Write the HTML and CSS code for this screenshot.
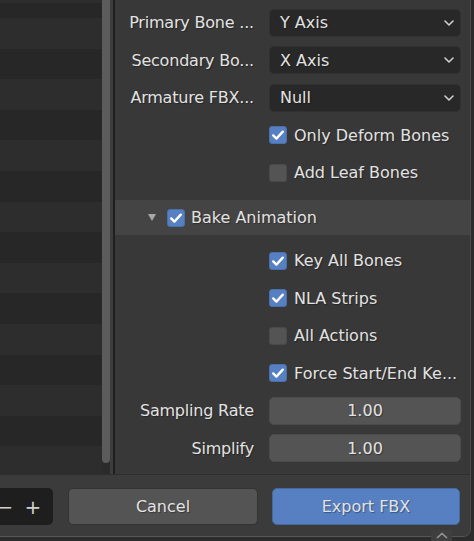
FILE: index.html
```html
<!DOCTYPE html>
<html>
<head>
<meta charset="utf-8">
<link rel="stylesheet" href="styles.css">
</head>
<body>
<div class="window">
  <div class="dialog">
    <div class="main">
      <div class="list"></div>
      <div class="scroll"><div class="thumb"></div></div>
      <div class="panel">
        <div class="row">
          <div class="label">Primary Bone ...</div>
          <div class="dropdown"><span>Y Axis</span><svg class="chev" width="10" height="6" viewBox="0 0 10 6"><path d="M1 1 L5 5 L9 1" fill="none" stroke="#d0d0d0" stroke-width="1.6" stroke-linecap="round" stroke-linejoin="round"/></svg></div>
        </div>
        <div class="row">
          <div class="label">Secondary Bo...</div>
          <div class="dropdown"><span>X Axis</span><svg class="chev" width="10" height="6" viewBox="0 0 10 6"><path d="M1 1 L5 5 L9 1" fill="none" stroke="#d0d0d0" stroke-width="1.6" stroke-linecap="round" stroke-linejoin="round"/></svg></div>
        </div>
        <div class="row">
          <div class="label">Armature FBX...</div>
          <div class="dropdown"><span>Null</span><svg class="chev" width="10" height="6" viewBox="0 0 10 6"><path d="M1 1 L5 5 L9 1" fill="none" stroke="#d0d0d0" stroke-width="1.6" stroke-linecap="round" stroke-linejoin="round"/></svg></div>
        </div>
        <div class="row">
          <div class="label"></div>
          <div class="check"><span class="box on"><svg width="18" height="18" viewBox="0 0 18 18"><path d="M4.2 9.4 L7.4 12.6 L13.8 5.6" fill="none" stroke="#fff" stroke-width="2.3" stroke-linecap="round" stroke-linejoin="round"/></svg></span><span>Only Deform Bones</span></div>
        </div>
        <div class="row">
          <div class="label"></div>
          <div class="check"><span class="box off"></span><span>Add Leaf Bones</span></div>
        </div>

        <div class="header">
          <svg class="tri" width="8" height="7" viewBox="0 0 8 7"><polygon points="0,0 8,0 4,7" fill="#a8a8a8"/></svg>
          <span class="box on"><svg width="18" height="18" viewBox="0 0 18 18"><path d="M4.2 9.4 L7.4 12.6 L13.8 5.6" fill="none" stroke="#fff" stroke-width="2.3" stroke-linecap="round" stroke-linejoin="round"/></svg></span>
          <span class="htext">Bake Animation</span>
        </div>

        <div class="sub">
          <div class="row">
            <div class="label"></div>
            <div class="check"><span class="box on"><svg width="18" height="18" viewBox="0 0 18 18"><path d="M4.2 9.4 L7.4 12.6 L13.8 5.6" fill="none" stroke="#fff" stroke-width="2.3" stroke-linecap="round" stroke-linejoin="round"/></svg></span><span>Key All Bones</span></div>
          </div>
          <div class="row">
            <div class="label"></div>
            <div class="check"><span class="box on"><svg width="18" height="18" viewBox="0 0 18 18"><path d="M4.2 9.4 L7.4 12.6 L13.8 5.6" fill="none" stroke="#fff" stroke-width="2.3" stroke-linecap="round" stroke-linejoin="round"/></svg></span><span>NLA Strips</span></div>
          </div>
          <div class="row">
            <div class="label"></div>
            <div class="check"><span class="box off"></span><span>All Actions</span></div>
          </div>
          <div class="row">
            <div class="label"></div>
            <div class="check"><span class="box on"><svg width="18" height="18" viewBox="0 0 18 18"><path d="M4.2 9.4 L7.4 12.6 L13.8 5.6" fill="none" stroke="#fff" stroke-width="2.3" stroke-linecap="round" stroke-linejoin="round"/></svg></span><span>Force Start/End Ke...</span></div>
          </div>
          <div class="row">
            <div class="label">Sampling Rate</div>
            <div class="number">1.00</div>
          </div>
          <div class="row">
            <div class="label">Simplify</div>
            <div class="number">1.00</div>
          </div>
        </div>
      </div>
    </div>
    <div class="footer">
      <div class="addrem"><span class="op">−</span><span class="op">+</span></div>
      <div class="btn cancel">Cancel</div>
      <div class="btn export">Export FBX</div>
    </div>
  </div>
  <div class="tab"><svg width="12" height="7" viewBox="0 0 12 7"><path d="M1 6 L6 1.5 L11 6" fill="none" stroke="#9a9a9a" stroke-width="1.5"/></svg></div>
</div>
</body>
</html>
```
FILE: styles.css
```css
* { box-sizing: border-box; }

body {
  margin: 0;
  background: #2a2a2a;
  font-family: "DejaVu Sans", "Noto Sans", sans-serif;
  font-size: 16px;
  color: #e2e2e2;
}

.window {
  position: relative;
  width: 474px;
  height: 541px;
  overflow: hidden;
  background: #2c2c2c;
}

.dialog {
  width: 471px;
  height: 537px;
  display: flex;
  flex-direction: column;
  background: #3b3b3b;
  border-right: 1px solid #4c4c4c;
  border-bottom: 1px solid #565656;
  border-bottom-right-radius: 8px;
  overflow: hidden;
}

.main {
  display: flex;
  height: 475px;
  border-bottom: 1px solid #2e2e2e;
}

.list {
  width: 102px;
  background-color: #272727;
  background-image: repeating-linear-gradient(to bottom, #2d2d2d 0, #2d2d2d 30.6px, #272727 30.6px, #272727 61.2px);
  background-position: 0 18px;
}

.scroll {
  width: 11px;
  background: #2b2b2b;
  border-right: 3px solid #3d3d3d;
}

.thumb {
  width: 8px;
  height: 463px;
  background: #5c5c5c;
  border-radius: 0 0 4px 4px;
}

.panel {
  flex: 1;
  background: #383838;
  border-left: 2px solid #1f1f1f;
  padding-top: 4px;
  text-shadow: 1px 1px 1px rgba(0, 0, 0, 0.35);
}

.row {
  display: grid;
  grid-template-columns: 126px 192px;
  column-gap: 15px;
  align-items: center;
  height: 37.5px;
  padding-left: 13px;
}

.label {
  text-align: right;
  white-space: nowrap;
  letter-spacing: -0.2px;
}

.dropdown {
  height: 28px;
  border-radius: 5px;
  background: #282828;
  border: 1px solid #313131;
  display: flex;
  align-items: center;
  justify-content: space-between;
  padding: 0 6px 0 10px;
}

.chev { display: block; }

.check {
  display: flex;
  align-items: center;
  gap: 7px;
  white-space: nowrap;
}

.box {
  width: 18px;
  height: 18px;
  border-radius: 3px;
  flex: none;
  display: block;
}

.box svg { display: block; }

.box.on {
  background: #5680c2;
  border: 1px solid #4a70ac;
}

.box.on svg { margin: -1px; }

.box.off {
  background: #545454;
  border: 1px solid #4a4a4a;
}

.header {
  margin-top: 8.5px;
  height: 35px;
  background: #444444;
  display: flex;
  align-items: center;
  padding-left: 33px;
}

.tri { display: block; margin-right: 11px; }

.htext { margin-left: 6px; }

.sub { padding-top: 7px; }

.number {
  height: 28px;
  border-radius: 5px;
  background: #545454;
  border: 1px solid #4b4b4b;
  display: flex;
  align-items: center;
  justify-content: center;
}

.footer {
  flex: 1;
  display: flex;
  align-items: flex-start;
  padding-top: 13px;
  background: #3b3b3b;
}

.addrem {
  width: 53px;
  height: 37px;
  background: #1e1e1e;
  border-radius: 0 5px 5px 0;
  display: flex;
  justify-content: flex-end;
  align-items: center;
  overflow: hidden;
  padding-right: 6px;
  color: #d0d0d0;
  font-size: 20px;
}

.op {
  flex: none;
  width: 28px;
  text-align: center;
}

.btn {
  height: 37px;
  border-radius: 5px;
  display: flex;
  align-items: center;
  justify-content: center;
  text-shadow: 1px 1px 1px rgba(0, 0, 0, 0.35);
}

.cancel {
  margin-left: 15px;
  width: 190px;
  background: #545454;
  border: 1px solid #333333;
}

.export {
  margin-left: 14px;
  width: 188px;
  background: #5680c2;
  border: 1px solid #45689f;
}

.tab {
  position: absolute;
  left: 431px;
  top: 530px;
  width: 21px;
  height: 11px;
  background: #3f3f3f;
  display: flex;
  justify-content: center;
  align-items: flex-start;
  padding-top: 2px;
}

.tab svg { display: block; }
```
